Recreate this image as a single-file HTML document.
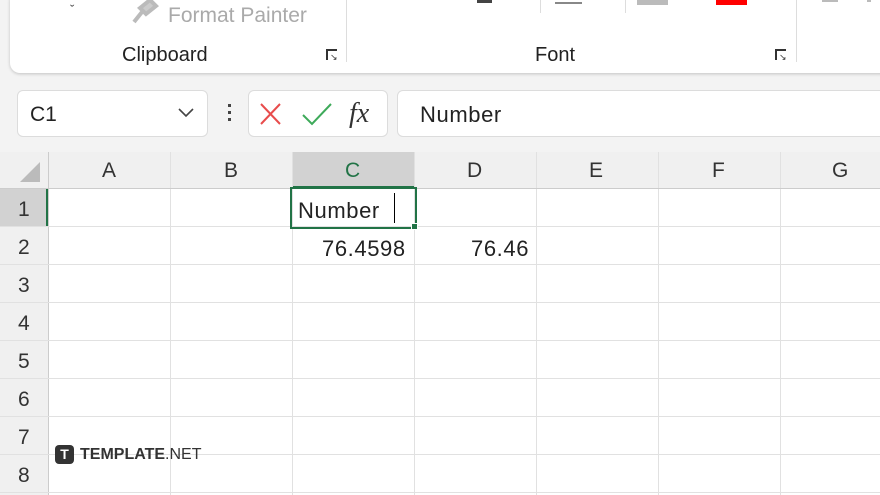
<!DOCTYPE html>
<html><head><style>
*{margin:0;padding:0;box-sizing:border-box}
body{width:880px;height:495px;overflow:hidden;background:#f3f3f3;font-family:"Liberation Sans",sans-serif;position:relative}
.a{position:absolute}
.ribbon{left:10px;top:-10px;width:890px;height:83px;background:#fff;border-radius:10px;box-shadow:0 1px 3px rgba(0,0,0,.2)}
.box{background:#fff;border:1px solid #dcdcdc;border-radius:6px}
.grid{left:0;top:152px;width:880px;height:343px;background:#fff}
.vl{position:absolute;top:0;width:1px;height:343px;background:#e1e1e1}
.hl{position:absolute;left:0;height:1px;width:880px;background:#e1e1e1}
.num{position:absolute;font-size:22px;color:#222;letter-spacing:0.6px}
.h{position:absolute;font-size:21px;color:#333}
</style></head><body>
<div class="a ribbon"></div>
<div class="a" style="left:70px;top:2px;font-size:13px;color:#333">&#711;</div>
<svg class="a" style="left:128px;top:0" width="34" height="26"><path d="M6 22 L14 12 M12 8 L22 0 L28 6 L18 14 Z" stroke="#bbb" stroke-width="4" fill="#ccc"/></svg>
<div class="a" style="left:168px;top:4px;font-size:21px;color:#aaa">Format Painter</div>
<div class="a" style="left:122px;top:44px;font-size:20px;color:#222">Clipboard</div>
<div class="a" style="left:535px;top:44px;font-size:20px;color:#222">Font</div>
<div class="a" style="left:326px;top:49px;width:11px;height:11px;border-left:2px solid #333;border-top:2px solid #333"></div>
<div class="a" style="left:330px;top:52px;font-size:9px;color:#333">&#8600;</div>
<div class="a" style="left:775px;top:49px;width:11px;height:11px;border-left:2px solid #333;border-top:2px solid #333"></div>
<div class="a" style="left:779px;top:52px;font-size:9px;color:#333">&#8600;</div>
<div class="a" style="left:346px;top:0;width:1px;height:62px;background:#ddd"></div>
<div class="a" style="left:796px;top:0;width:1px;height:62px;background:#ddd"></div>
<div class="a" style="left:540px;top:0;width:1px;height:13px;background:#ddd"></div>
<div class="a" style="left:625px;top:0;width:1px;height:13px;background:#ddd"></div>
<div class="a" style="left:477px;top:0;width:15px;height:3px;background:#444"></div>
<div class="a" style="left:555px;top:2px;width:27px;height:2px;background:#888"></div>
<div class="a" style="left:637px;top:0;width:31px;height:5px;background:#bbb"></div>
<div class="a" style="left:716px;top:0;width:31px;height:5px;background:#f00"></div>
<div class="a" style="left:822px;top:0;width:16px;height:2px;background:#bbb"></div>
<div class="a" style="left:867px;top:0;width:4px;height:2px;background:#bbb"></div>

<div class="a box" style="left:17px;top:90px;width:191px;height:47px"></div>
<div class="a" style="left:30px;top:103px;font-size:21px;color:#222">C1</div>
<svg class="a" style="left:177px;top:107px" width="18" height="12"><path d="M2 2 L9 9 L16 2" stroke="#444" stroke-width="1.6" fill="none"/></svg>
<div class="a" style="left:228px;top:104px;width:3px;height:3px;background:#444"></div>
<div class="a" style="left:228px;top:111px;width:3px;height:3px;background:#444"></div>
<div class="a" style="left:228px;top:118px;width:3px;height:3px;background:#444"></div>
<div class="a box" style="left:248px;top:90px;width:140px;height:47px"></div>
<svg class="a" style="left:258px;top:101px" width="26" height="26"><path d="M3 3 L22 23 M22 3 L3 23" stroke="#e84c4c" stroke-width="2" fill="none"/></svg>
<svg class="a" style="left:300px;top:101px" width="34" height="26"><path d="M3 14 L12 23 L31 3" stroke="#3eaa5a" stroke-width="2" fill="none"/></svg>
<div class="a" style="left:349px;top:98px;font-size:28px;font-family:'Liberation Serif',serif;font-style:italic;color:#333">fx</div>
<div class="a box" style="left:397px;top:90px;width:500px;height:47px"></div>
<div class="a" style="left:420px;top:102px;font-size:22px;color:#222;letter-spacing:0.6px">Number</div>

<div class="a grid">
<div class="a" style="left:0;top:0;width:880px;height:36px;background:#f0f0f0"></div>
<div class="a" style="left:0;top:0;width:48px;height:343px;background:#f0f0f0"></div>
<div class="a" style="left:292px;top:0;width:122px;height:36px;background:#d2d2d2"></div>
<div class="a" style="left:0;top:36px;width:48px;height:38px;background:#d2d2d2"></div>
<svg class="a" style="left:18px;top:8px" width="24" height="24"><path d="M22 2 L22 22 L2 22 Z" fill="#bbb"/></svg>
<div class="a" style="left:292px;top:34px;width:122px;height:2px;background:#217346"></div>
<div class="a" style="left:46px;top:36px;width:2px;height:38px;background:#217346"></div>
<div class="vl" style="left:48px;background:#ccc"></div>
<div class="vl" style="left:170px"></div><div class="vl" style="left:292px"></div><div class="vl" style="left:414px"></div><div class="vl" style="left:536px"></div><div class="vl" style="left:658px"></div><div class="vl" style="left:780px"></div>
<div class="hl" style="top:36px;background:#ccc"></div>
<div class="hl" style="top:74px"></div><div class="hl" style="top:112px"></div><div class="hl" style="top:150px"></div><div class="hl" style="top:188px"></div><div class="hl" style="top:226px"></div><div class="hl" style="top:264px"></div><div class="hl" style="top:302px"></div><div class="hl" style="top:340px"></div>
<div class="h" style="left:102px;top:7px">A</div>
<div class="h" style="left:224px;top:7px">B</div>
<div class="h" style="left:345px;top:7px;color:#217346">C</div>
<div class="h" style="left:467px;top:7px">D</div>
<div class="h" style="left:589px;top:7px">E</div>
<div class="h" style="left:712px;top:7px">F</div>
<div class="h" style="left:832px;top:7px">G</div>
<div class="h" style="left:18px;top:46px">1</div>
<div class="h" style="left:18px;top:84px">2</div>
<div class="h" style="left:18px;top:122px">3</div>
<div class="h" style="left:18px;top:160px">4</div>
<div class="h" style="left:18px;top:198px">5</div>
<div class="h" style="left:18px;top:236px">6</div>
<div class="h" style="left:18px;top:274px">7</div>
<div class="h" style="left:18px;top:312px">8</div>
<div class="a" style="left:290px;top:35px;width:127px;height:42px;border:2px solid #217346"></div>
<div class="a" style="left:411px;top:71px;width:7px;height:7px;background:#217346;border:1px solid #fff"></div>
<div class="num" style="left:298px;top:46px">Number</div>
<div class="a" style="left:394px;top:41px;width:1px;height:30px;background:#000"></div>
<div class="num" style="left:322px;top:84px">76.4598</div>
<div class="num" style="left:471px;top:84px">76.46</div>
<div class="a" style="left:55px;top:293px;width:19px;height:19px;background:#333;border-radius:4px;color:#fff;font-weight:bold;font-size:14px;text-align:center;line-height:19px">T</div>
<div class="a" style="left:80px;top:294px;font-size:16px;color:#333"><b>TEMPLATE</b>.NET</div>
</div>
</body></html>
